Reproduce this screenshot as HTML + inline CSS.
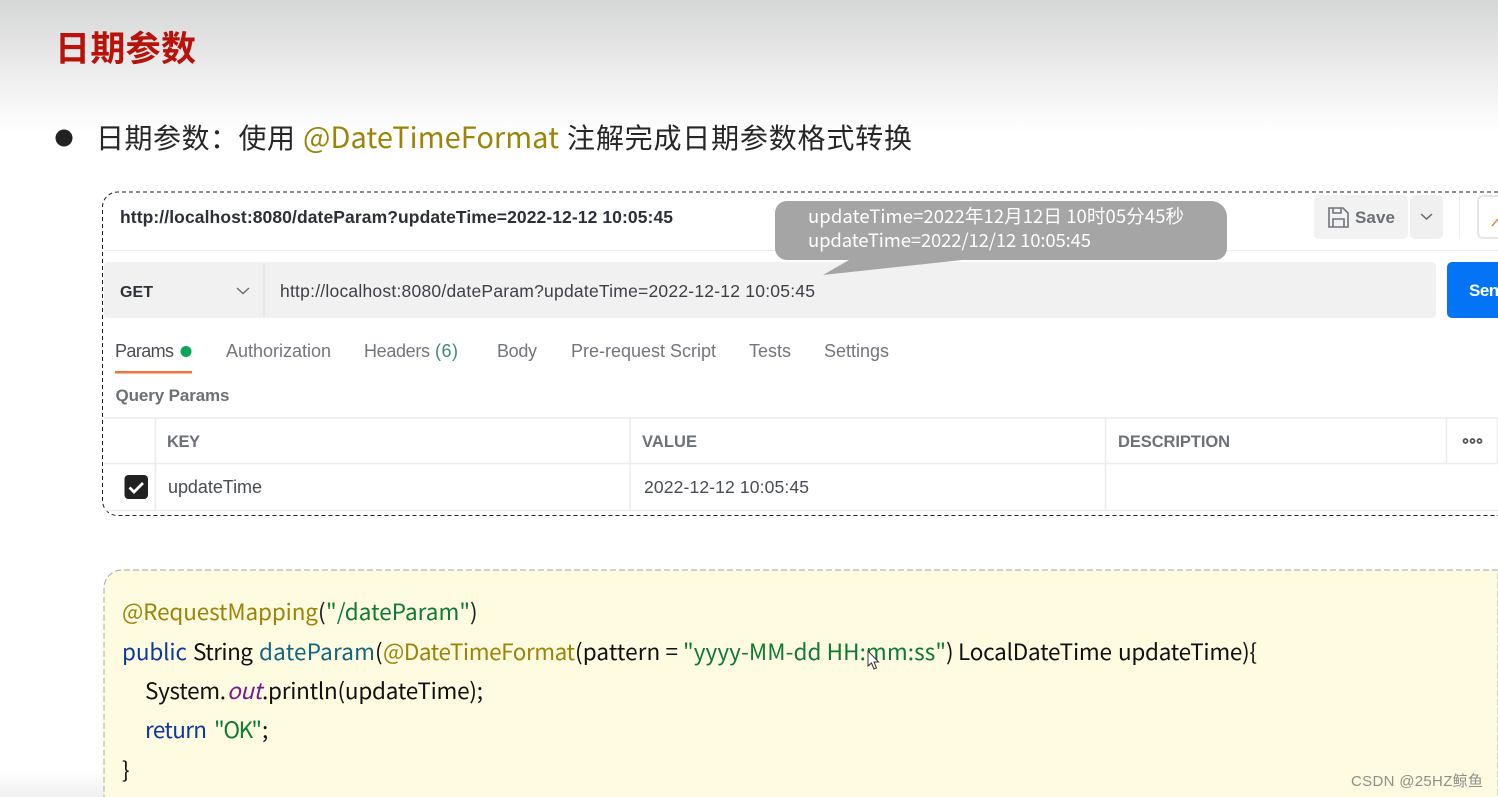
<!DOCTYPE html>
<html><head><meta charset="utf-8"><style>
html,body{margin:0;padding:0;background:#fff;width:1498px;height:797px;overflow:hidden}
svg{display:block;position:absolute;left:0;top:0}
.in{font-family:"Liberation Sans",sans-serif}
.cj{font-family:"Noto Sans CJK SC",sans-serif}
</style></head><body>
<svg width="1498" height="797" viewBox="0 0 1498 797" xmlns="http://www.w3.org/2000/svg">
<defs>
<linearGradient id="t" x1="0" y1="0" x2="0" y2="1"><stop offset="0" stop-color="#d5d6d6"/><stop offset="0.5" stop-color="#ebebeb"/><stop offset="1" stop-color="#fff"/></linearGradient>
<linearGradient id="b" x1="0" y1="0" x2="0" y2="1"><stop offset="0" stop-color="#fff"/><stop offset="1" stop-color="#f0f0f0"/></linearGradient>
</defs>
<rect width="1498" height="797" fill="#fff"/>
<rect width="1498" height="132" fill="url(#t)"/>
<rect y="770" width="1498" height="27" fill="url(#b)"/>

<text class="cj" x="55" y="61" font-size="35" font-weight="700" fill="#b8120a" textLength="141">日期参数</text>
<circle cx="64" cy="138" r="8.5" fill="#222"/>
<text class="cj" x="96" y="148" font-size="28" fill="#262626" textLength="199">日期参数：使用</text>
<text class="cj" x="303" y="148" font-size="29" fill="#9d8409" textLength="256">@DateTimeFormat</text>
<text class="cj" x="567" y="148" font-size="28" fill="#262626" textLength="345">注解完成日期参数格式转换</text>

<!-- postman card -->
<path d="M1498 192H118a15 15 0 0 0-15.500 15V500a15 15 0 0 0 15.500 15.500H1498" fill="#fff" stroke="#222" stroke-width="1" stroke-dasharray="4 3"/>
<text class="in" x="120" y="223" font-size="17.500" font-weight="700" fill="#2b2f36" textLength="553">http://localhost:8080/dateParam?updateTime=2022-12-12 10:05:45</text>
<line x1="104" y1="250.500" x2="1498" y2="250.500" stroke="#ececec"/>

<rect x="1314" y="195" width="94" height="44" rx="5" fill="#f2f2f2"/>
<rect x="1410" y="195" width="33" height="44" rx="5" fill="#f0f0f0"/>
<g fill="none" stroke="#70757c" stroke-width="1.600">
<path d="M1329 208h14l5 5v14h-19z"/>
<path d="M1333 208v5h8v-5M1333 227v-8h11v8"/>
</g>
<text class="in" x="1355" y="223" font-size="17" font-weight="700" fill="#6b6f76" textLength="40">Save</text>
<path d="M1421 214l5.500 5 5.500-5" fill="none" stroke="#666" stroke-width="1.500"/>
<line x1="1459.500" y1="195" x2="1459.500" y2="239" stroke="#eee"/>
<rect x="1478" y="196" width="40" height="42" rx="5" fill="#fff" stroke="#e6e6e6" stroke-width="2"/>
<path d="M1492 226l6-7" fill="none" stroke="#f3854a" stroke-width="1.600"/>

<rect x="104" y="262" width="1332" height="56" rx="4" fill="#f1f1f1"/>
<line x1="264" y1="263" x2="264" y2="317" stroke="#e8e8e8" stroke-width="2"/>
<text class="in" x="120" y="297" font-size="16" font-weight="700" fill="#2d3138" textLength="33">GET</text>
<path d="M237 288l6 5.500 6-5.500" fill="none" stroke="#6d6f73" stroke-width="1.400"/>
<text class="in" x="280" y="297" font-size="17.500" fill="#3d4046" textLength="535">http://localhost:8080/dateParam?updateTime=2022-12-12 10:05:45</text>
<rect x="1447" y="262" width="70" height="56" rx="5" fill="#0374f6"/>
<text class="in" x="1469" y="296" font-size="17" font-weight="700" fill="#fff" textLength="40">Send</text>

<!-- tabs -->
<g class="in" font-size="18" fill="#72767d">
<text x="115" y="357" fill="#4a4e55" textLength="59">Params</text>
<text x="226" y="357" textLength="105">Authorization</text>
<text x="364" y="357" textLength="66">Headers</text>
<text x="435" y="357" fill="#3f8a78" textLength="23">(6)</text>
<text x="497" y="357" textLength="40">Body</text>
<text x="571" y="357" textLength="145">Pre-request Script</text>
<text x="749" y="357" textLength="42">Tests</text>
<text x="824" y="357" textLength="65">Settings</text>
</g>
<circle cx="186" cy="351.500" r="5.500" fill="#0ca55c"/>
<rect x="115" y="371" width="77" height="2.500" fill="#f2743a"/>
<text class="in" x="115.500" y="401" font-size="17" font-weight="700" fill="#6c7077" textLength="114">Query Params</text>

<!-- table -->
<g stroke="#ececec" stroke-width="1.500" fill="none">
<line x1="104" y1="418" x2="1498" y2="418"/>
<line x1="104" y1="463.500" x2="1498" y2="463.500"/>
<line x1="104" y1="510.500" x2="1498" y2="510.500"/>
<line x1="155.500" y1="418" x2="155.500" y2="510"/>
<line x1="630" y1="418" x2="630" y2="510"/>
<line x1="1105.500" y1="418" x2="1105.500" y2="510"/>
<line x1="1446.500" y1="418" x2="1446.500" y2="463"/>
<line x1="1497.500" y1="418" x2="1497.500" y2="463"/>
</g>
<g class="in" font-size="16.500" font-weight="700" fill="#6c7077">
<text x="167" y="447" textLength="33">KEY</text>
<text x="642" y="447" textLength="55">VALUE</text>
<text x="1118" y="447" textLength="112">DESCRIPTION</text>
</g>
<g fill="none" stroke="#555" stroke-width="1.800"><circle cx="1465.500" cy="441" r="2"/><circle cx="1472.500" cy="441" r="2"/><circle cx="1479.500" cy="441" r="2"/></g>
<rect x="124.500" y="475" width="23.500" height="24" rx="4" fill="#212121"/>
<path d="M129.500 487.500l4.500 4.500 9-9" fill="none" stroke="#fff" stroke-width="2.800"/>
<text class="in" x="168" y="493" font-size="18" fill="#484c53" textLength="94">updateTime</text>
<text class="in" x="644" y="493" font-size="17.500" fill="#484c53" textLength="165">2022-12-12 10:05:45</text>

<!-- callout -->
<path d="M787 201H1211a16 16 0 0 1 16 16V248a12 12 0 0 1-12 12H962L823 275 849 260H787a12 12 0 0 1-12-12V213a12 12 0 0 1 12-12z" fill="#a5a5a5"/>
<text class="cj" x="808" y="223" font-size="18.500" fill="#fff" textLength="376">updateTime=2022年12月12日 10时05分45秒</text>
<text class="cj" x="808" y="247" font-size="18.500" fill="#fff" textLength="283">updateTime=2022/12/12 10:05:45</text>

<!-- code box -->
<path d="M1498 570H122a18 18 0 0 0-18 18V800H1498z" fill="#fefbe1" stroke="#a8a8a0" stroke-width="1" stroke-dasharray="6 3"/>
<g class="cj" font-size="22.500">
<text x="122" y="620" fill="#9d8409" textLength="196">@RequestMapping</text>
<text x="318" y="620" fill="#1c1c1c" textLength="8">(</text>
<text x="326" y="620" fill="#0d7a35" textLength="144">"/dateParam"</text>
<text x="470" y="620" fill="#1c1c1c" textLength="8">)</text>

<text x="122" y="660" fill="#0b3a9e" textLength="65">public</text>
<text x="193" y="660" fill="#111" textLength="60">String</text>
<text x="259" y="660" fill="#12667f" textLength="116">dateParam</text>
<text x="375" y="660" fill="#111" textLength="8">(</text>
<text x="383" y="660" fill="#9d8409" textLength="192">@DateTimeFormat</text>
<text x="575" y="660" fill="#111" textLength="103">(pattern =</text>
<text x="683" y="660" fill="#0d7a35" textLength="263">"yyyy-MM-dd HH:mm:ss"</text>
<text x="946" y="660" fill="#111" textLength="8">)</text>
<text x="958" y="660" fill="#111" textLength="154">LocalDateTime</text>
<text x="1118" y="660" fill="#111" textLength="139">updateTime){</text>

<text x="145" y="699" fill="#111" textLength="81">System.</text>
<text x="227" y="699" fill="#7b1a8c" font-style="italic" textLength="35">out</text>
<text x="262" y="699" fill="#111" textLength="221">.println(updateTime);</text>

<text x="145" y="738" fill="#0b3a9e" textLength="62">return</text>
<text x="214" y="738" fill="#0d7a35" textLength="48">"OK"</text>
<text x="262" y="738" fill="#111" textLength="7">;</text>
<text x="122" y="778" fill="#111" textLength="8">}</text>
</g>

<!-- cursor -->
<path d="M868 651v15l3.500-3 2.500 6 2.500-1-2.500-6h4.500z" fill="#fff" stroke="#333" stroke-width="1"/>

<text class="in" x="1351" y="786" font-size="15" fill="#8f8f8a" textLength="132" style="font-family:'Liberation Sans','Noto Sans CJK SC',sans-serif">CSDN @25HZ鲸鱼</text>
</svg>
</body></html>
